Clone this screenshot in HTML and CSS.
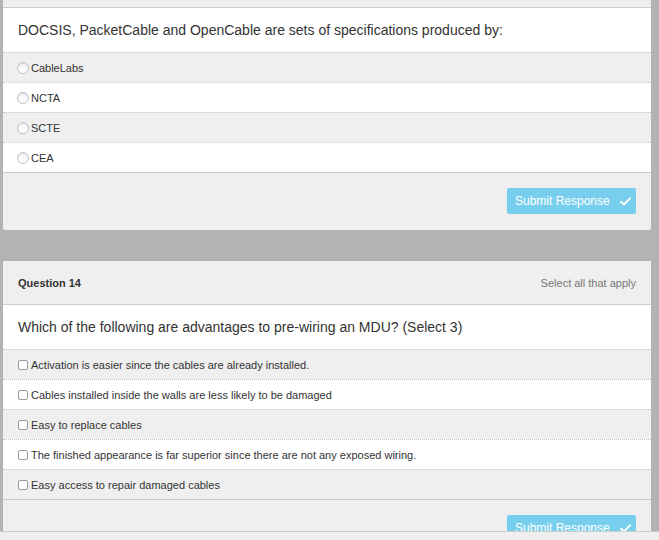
FILE: index.html
```html
<!DOCTYPE html>
<html>
<head>
<meta charset="utf-8">
<link rel="stylesheet" href="styles.css">
</head>
<body>
<div class="page">
  <section class="card">
    <div class="card-head cut"></div>
    <div class="question">DOCSIS, PacketCable and OpenCable are sets of specifications produced by:</div>
    <ul class="options">
      <li class="opt alt"><span class="radio"></span>CableLabs</li>
      <li class="opt"><span class="radio"></span>NCTA</li>
      <li class="opt alt"><span class="radio"></span>SCTE</li>
      <li class="opt"><span class="radio"></span>CEA</li>
    </ul>
    <div class="card-foot">
      <button class="submit">Submit Response<svg class="check" viewBox="0 0 12 10" width="11" height="9"><path d="M1 5.2 L4.3 8.3 L11 1.5" fill="none" stroke="#fff" stroke-width="2.2" stroke-linecap="round" stroke-linejoin="round"/></svg></button>
    </div>
  </section>

  <section class="card">
    <div class="card-head">
      <span class="qnum">Question 14</span>
      <span class="hint">Select all that apply</span>
    </div>
    <div class="question">Which of the following are advantages to pre-wiring an MDU? (Select 3)</div>
    <ul class="options">
      <li class="opt alt"><span class="box"></span>Activation is easier since the cables are already installed.</li>
      <li class="opt"><span class="box"></span>Cables installed inside the walls are less likely to be damaged</li>
      <li class="opt alt"><span class="box"></span>Easy to replace cables</li>
      <li class="opt"><span class="box"></span>The finished appearance is far superior since there are not any exposed wiring.</li>
      <li class="opt alt"><span class="box"></span>Easy access to repair damaged cables</li>
    </ul>
    <div class="card-foot">
      <button class="submit">Submit Response<svg class="check" viewBox="0 0 12 10" width="11" height="9"><path d="M1 5.2 L4.3 8.3 L11 1.5" fill="none" stroke="#fff" stroke-width="2.2" stroke-linecap="round" stroke-linejoin="round"/></svg></button>
    </div>
  </section>
</div>
<div class="bottom-bar"></div>
</body>
</html>
```
FILE: styles.css
```css
html, body {
  margin: 0;
  padding: 0;
}
body {
  background: #b3b3b3;
  font-family: "Liberation Sans", Arial, Helvetica, sans-serif;
  color: #333;
  height: 540px;
  overflow: hidden;
}
.page {
  padding: 0 8px 0 3px;
  display: flex;
  flex-direction: column;
  gap: 31px;
}
.card {
  background: #efefef;
  border-radius: 0 0 2px 2px;
}
.card-head {
  height: 43px;
  border-bottom: 1px solid #cccccc;
  display: flex;
  align-items: center;
  justify-content: space-between;
  padding: 0 15px 0 15px;
  font-size: 11px;
  border-radius: 2px 2px 0 0;
}
.card-head.cut {
  height: 7px;
  border-radius: 0;
}
.qnum {
  font-weight: bold;
  color: #333;
}
.hint {
  color: #777;
}
.question {
  background: #fff;
  height: 44px;
  display: flex;
  align-items: center;
  padding-left: 15px;
  font-size: 14px;
  color: #333;
}
.options {
  list-style: none;
  margin: 0;
  padding: 0;
}
.opt {
  height: 29px;
  border-top: 1px dotted #c4c4c4;
  background: #fff;
  display: flex;
  align-items: center;
  padding-left: 14px;
  font-size: 11px;
  color: #333;
}
.opt.alt {
  background: #efefef;
}
.radio {
  width: 10px;
  height: 10px;
  border-radius: 50%;
  border: 1px solid #c2c2c2;
  background: linear-gradient(#f2f2f2, #ffffff);
  box-shadow: inset 0 1px 1px rgba(0,0,0,0.08);
  margin-right: 2px;
  flex: none;
}
.box {
  width: 8px;
  height: 8px;
  border-radius: 2px;
  border: 1px solid #9a9a9a;
  background: #fff;
  margin: 0 3px 0 1px;
  flex: none;
}
.card-foot {
  border-top: 1px solid #cccccc;
  height: 58px;
  display: flex;
  justify-content: flex-end;
  align-items: flex-start;
  padding: 15px 15px 0 0;
  box-sizing: border-box;
}
.submit {
  width: 129px;
  height: 26px;
  background: #78cfed;
  border: none;
  border-radius: 2px;
  color: #fff;
  font-family: "Liberation Sans", Arial, sans-serif;
  font-size: 12px;
  display: flex;
  align-items: center;
  justify-content: flex-start;
  padding: 0 0 0 8px;
  gap: 10px;
}
.check {
  flex: none;
}
.bottom-bar {
  position: fixed;
  left: 0;
  right: 0;
  bottom: 0;
  height: 8px;
  background: #efefef;
  border-top: 1px solid #cccccc;
}
```
